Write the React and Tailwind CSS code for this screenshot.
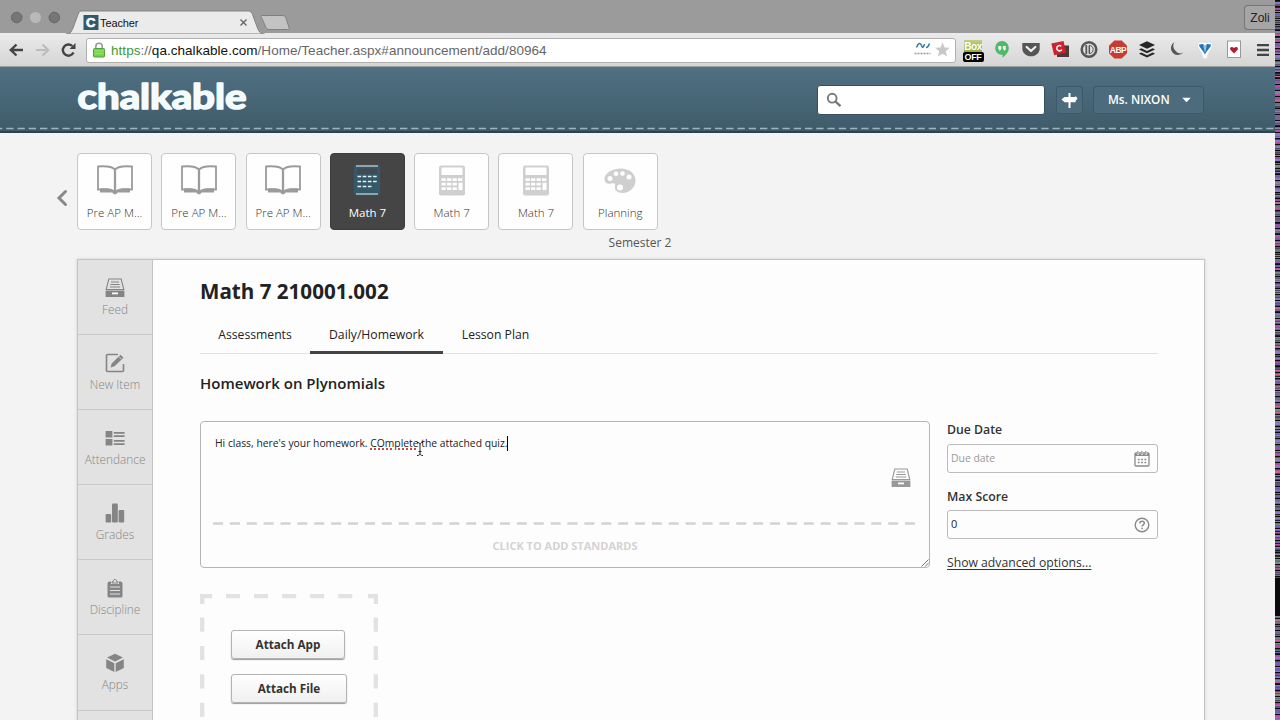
import React, { useState } from "react";

const classes = [
  { name: "Pre AP M...", icon: "book" },
  { name: "Pre AP M...", icon: "book" },
  { name: "Pre AP M...", icon: "book" },
  { name: "Math 7", icon: "calcActive" },
  { name: "Math 7", icon: "calc" },
  { name: "Math 7", icon: "calc" },
  { name: "Planning", icon: "palette" },
];

const tabs = [
  { name: "Assessments", width: "w-[110px]" },
  { name: "Daily/Homework", width: "w-[133px]" },
  { name: "Lesson Plan", width: "w-[105px]" },
];

function DrawerIcon({ className }) {
  return (
    <svg className={className} width="20" height="20" viewBox="0 0 20 20" fill="none">
      <path d="M3.8 1h12.4l2.6 10.5H1.2z" stroke="currentColor" strokeWidth="1.1" />
      <path d="M6 4h8M5.3 6.5h9.4M4.8 9h10.4" stroke="currentColor" strokeWidth="1" />
      <path d="M.6 12.500h18.8v6.500H.6z" fill="currentColor" />
      <path d="M7 14.500h6v1.800H7z" fill="#fff" />
    </svg>
  );
}

function BookIcon() {
  return (
    <svg width="38" height="32" viewBox="0 0 38 32" fill="none">
      <path d="M2 2.500c7-.6 13.500-.5 17 3 3.500-3.500 10-3.600 17-3v23c-7-.5-13.500-.2-17 2.200-3.500-2.400-10-2.700-17-2.200z" fill="#fff" stroke="#9b9b9b" strokeWidth="1.800" />
      <path d="M19 5.500v22" stroke="#9b9b9b" strokeWidth="2.300" />
      <path d="M4 24.500c6-.4 12-.3 15 2.500 3-2.800 9-2.900 15-2.500v4H21.500c-.5 2.400-4.500 2.400-5 0H4z" fill="#9b9b9b" />
    </svg>
  );
}

function CalcIcon() {
  return (
    <svg width="28" height="32" viewBox="0 0 28 32" fill="none">
      <rect x="1" y="1.500" width="26" height="30" rx="2" fill="#cfcfcf" />
      <path d="M3.500 3.500h21v7.500h-21z" fill="#fff" />
      <path d="M3.500 15.700h21M3.500 20.200h16.500M3.500 24.700h16.500" stroke="#fff" strokeWidth="2.800" strokeDasharray="4.300 1.200" />
      <path d="M20.500 18.700h4v7.400h-4z" fill="#fff" />
    </svg>
  );
}

function CalcActiveIcon() {
  return (
    <svg width="28" height="32" viewBox="0 0 28 32" fill="none">
      <rect x="1" y="1" width="26" height="30" rx="2" fill="#36596a" />
      <path d="M4 4.500h20v5.500H4z" fill="#424a4e" />
      <path d="M3 2h22M3 30h22" stroke="#d9f1f8" strokeWidth="1.200" />
      <path d="M4.500 12.500h20M4.500 17.500h20M4.500 22.500h15" stroke="#e3f3f8" strokeWidth="1.300" strokeDasharray="3.600 1.600" />
    </svg>
  );
}

function PaletteIcon() {
  return (
    <svg width="32" height="28" viewBox="0 0 32 28">
      <path d="M18 2.500C8 2 .5 7.500.5 13c0 4 3.500 5.500 7 4.600 3-.8 4 .4 3.500 2.700-.8 4 2.500 6.700 7.500 6.700C26 27 31.500 21 31.500 14.500S26 3 18 2.500z" fill="#cfcfcf" />
      <g fill="#fff">
        <circle cx="6" cy="12.500" r="2.500" />
        <circle cx="12" cy="7.800" r="2.300" />
        <circle cx="18.500" cy="7.500" r="2.300" />
        <circle cx="25" cy="11" r="2.500" />
        <circle cx="16" cy="21.500" r="3" />
      </g>
    </svg>
  );
}

const classIcons = {
  book: BookIcon,
  calc: CalcIcon,
  calcActive: CalcActiveIcon,
  palette: PaletteIcon,
};

function NewItemIcon() {
  return (
    <svg width="20" height="20" viewBox="0 0 20 20" fill="none">
      <path d="M13 1.500H2.500a1 1 0 0 0-1 1v15a1 1 0 0 0 1 1h15a1 1 0 0 0 1-1V11" stroke="currentColor" strokeWidth="1.600" />
      <path d="M5.500 14.500l1.200-4L15.500 1.700l3 3-9 8.600z" fill="currentColor" />
      <path d="M13.800 3.500l2.800 2.800" stroke="#e2e2e2" strokeWidth=".8" />
    </svg>
  );
}

function AttendanceIcon() {
  return (
    <svg width="20" height="20" viewBox="0 0 20 20" fill="currentColor">
      <path d="M.6 3h6.800v6.600H.6zM.6 11h6.800v6.600H.6zM8.800 4h10.800v1.800H8.800zM8.800 7.200h10.800V9H8.800zM8.800 12h10.800v1.800H8.800zM8.800 15.200h10.800V17H8.800z" />
    </svg>
  );
}

function GradesIcon() {
  return (
    <svg width="20" height="20" viewBox="0 0 20 20" fill="currentColor">
      <rect x=".6" y="11" width="5.600" height="8.500" rx="1" />
      <rect x="7" y=".5" width="5.800" height="19" rx="1" />
      <rect x="13.600" y="7" width="5.600" height="12.500" rx="1" />
    </svg>
  );
}

function DisciplineIcon() {
  return (
    <svg width="20" height="20" viewBox="0 0 20 20" fill="none">
      <path d="M2.500 5.500a2 2 0 0 1 2-2H6V6h8V3.500h1.500a2 2 0 0 1 2 2V18a1.500 1.500 0 0 1-1.500 1.500H4A1.500 1.500 0 0 1 2.500 18z" fill="currentColor" />
      <path d="M7 5V3.800h1.300a1.800 1.800 0 1 1 3.400 0H13V5z" stroke="currentColor" />
      <path d="M5 9h10M5 12.500h10M5 16h10" stroke="#e2e2e2" strokeWidth="1.200" />
    </svg>
  );
}

function AppsIcon() {
  return (
    <svg width="20" height="20" viewBox="0 0 20 20" fill="currentColor">
      <path d="M10 .8l8 3.800-8 4-8-4zM1.200 6.300L9.300 10.300v8.700L1.200 15zM18.800 6.300l-8.100 4v8.700l8.100-4z" />
    </svg>
  );
}

const menu = [
  { name: "Feed", Icon: DrawerIcon },
  { name: "New Item", Icon: NewItemIcon },
  { name: "Attendance", Icon: AttendanceIcon },
  { name: "Grades", Icon: GradesIcon },
  { name: "Discipline", Icon: DisciplineIcon },
  { name: "Apps", Icon: AppsIcon },
];

function Extensions() {
  return (
    <div className="ml-[6px] flex items-center gap-[7px]">
      <div className="mt-[2px] flex h-[22px] w-[22px] flex-col items-center font-['Liberation_Sans'] leading-none">
        <span className="h-[12px] w-[18px] bg-linear-to-b from-[#c3cd86] to-[#93ab3c] text-center text-[10px] font-bold leading-[13px] tracking-[-0.5px] text-white">Box</span>
        <span className="h-[10px] w-[21px] rounded-[2px] bg-black text-center text-[9px] font-bold leading-[11px] tracking-[-0.4px] text-white">OFF</span>
      </div>
      <svg width="22" height="22" viewBox="0 0 22 22">
        <path d="M11 2a6.800 6.800 0 0 1 6.800 6.900c0 4-3 7.300-6.300 9.600v-2.700C7 15.800 4.200 12.700 4.200 8.900A6.800 6.800 0 0 1 11 2z" fill="#4fb968" />
        <path d="M7.200 7h3v3.200l-1.300 1.600H8l.5-1.600H7.200zM11.800 7h3v3.200l-1.300 1.600h-.9l.5-1.600h-1.300z" fill="#e9f7ec" />
      </svg>
      <svg width="22" height="22" viewBox="0 0 22 22">
        <path d="M2.300 4h17.400v5.500c0 4.500-4 7.800-8.700 7.800s-8.700-3.300-8.700-7.800z" fill="#555" />
        <path d="M6.700 8l4.300 4 4.300-4" fill="none" stroke="#eee" strokeWidth="2.300" strokeLinecap="round" strokeLinejoin="round" />
      </svg>
      <svg width="22" height="22" viewBox="0 0 22 22">
        <path d="M8 6.500h12V18H8z" fill="#4a3a3a" />
        <path d="M2.300 4.500L14.500 2l2.700 11.500-12 2.700z" fill="#d0202c" />
        <path d="M12.300 7.200a2.700 2.700 0 1 0 .5 3.400" fill="none" stroke="#fff" strokeWidth="1.500" />
      </svg>
      <svg width="22" height="22" viewBox="0 0 22 22" fill="none">
        <circle cx="11" cy="10.500" r="7.300" stroke="#555" strokeWidth="2.500" />
        <path d="M8.300 6v9" stroke="#555" strokeWidth="1.800" />
        <path d="M11.300 6.500v8" stroke="#555" strokeWidth="1.500" />
        <path d="M11 6.300a4.200 4.200 0 0 1 0 8.400" stroke="#555" />
      </svg>
      <svg className="overflow-visible" width="22" height="22" viewBox="0 0 22 22">
        <path d="M7.300 1.500h7.400L20 6.800v7.400l-5.300 5.300H7.300L2 14.200V6.800z" fill="#c93a31" />
        <text x="11" y="13.700" textAnchor="middle" fill="#fff" className="font-['Liberation_Sans'] text-[8.500px] font-bold tracking-[-0.5px]">ABP</text>
      </svg>
      <svg width="22" height="22" viewBox="0 0 22 22" fill="#262626">
        <path d="M11 2.300l8 3.700-8 3.800L3 6z" />
        <path d="M3 10.400l2.300-1.100L11 12l5.700-2.700 2.300 1.100-8 3.800z" />
        <path d="M3 14.700l2.300-1.100 5.700 2.700 5.700-2.700 2.300 1.100-8 3.800z" />
      </svg>
      <svg width="22" height="22" viewBox="0 0 22 22">
        <path d="M9.500 3a7 7 0 1 0 8.800 10.600 5.800 5.800 0 0 1-7.600-1.600A6.500 6.500 0 0 1 9.500 3z" fill="#555" />
      </svg>
      <svg width="22" height="22" viewBox="0 0 22 22">
        <path d="M3.500 6c0-2.500 2.500-3.800 5-2.800h5c2.500-1 5 .3 5 2.800 0 4-4.500 7.500-5 11.500a2.200 2.200 0 0 1-5 0C8 13.500 3.500 10 3.500 6z" fill="#fff" stroke="#d5dde5" />
        <path d="M5 5.500l4-.6 2 2 2-2 4 .6c0 3-4 5.500-6 10-2-4.500-6-7-6-10z" fill="#2873b4" />
        <path d="M9 5.200l2 2 2-2-2 9z" fill="#8cc8e8" />
      </svg>
      <svg width="22" height="22" viewBox="0 0 22 22">
        <rect x="4.500" y="2" width="13" height="16.500" fill="#fff" stroke="#999" />
        <path d="M11 14.500l-3.600-3.800c-1.200-1.600.9-4.200 3.600-1.700 2.700-2.500 4.800.1 3.600 1.700z" fill="#b11d33" />
      </svg>
      <svg width="22" height="22" viewBox="0 0 22 22">
        <path d="M5 6.200h12M5 11h12M5 15.800h12" stroke="#444" strokeWidth="2.300" />
      </svg>
    </div>
  );
}

function Browser() {
  return (
    <div className="font-['Liberation_Sans',sans-serif]">
      <div className="relative flex h-[33px] justify-between bg-[#9b9b9b]">
        <svg width="300" height="34" viewBox="0 0 300 34">
          <g fill="#767676" stroke="#686868">
            <circle cx="16.700" cy="17.500" r="5.300" />
            <circle cx="54.300" cy="17.500" r="5.300" />
          </g>
          <circle cx="35.500" cy="17.500" r="5.500" fill="#b9b9b9" />
          <path d="M66 34c5 0 5.500-3 7-6l5-13.500c1-2.500 1.500-3.500 4-3.500h166c2.500 0 3.500 1 4.500 3.500L257.500 28c1.500 3 2 6 7 6z" fill="#ebebeb" stroke="#828282" />
          <path d="M262 15.500h20c2 0 3 .5 3.700 2l3.300 10c.4 1.200 0 2-1.500 2H269c-1.500 0-2.500-.8-3-2l-4.500-10c-.5-1.200-.5-2 .5-2z" fill="#c3c3c3" stroke="#808080" />
          <path d="M83.500 15h15v15h-15z" fill="#33596c" />
          <text x="86" y="27" fill="#fff" stroke="#fff" strokeWidth=".7" className="text-[13px] font-bold">C</text>
          <text x="100" y="26.500" fill="#111" textLength="38.500" className="text-[11px]">Teacher</text>
          <path d="M240.500 19.500l6 6m0-6l-6 6" stroke="#666" strokeWidth="1.400" />
        </svg>
        <div className="mt-[5px] h-[25px] w-[31px] rounded-l-[4px] border border-r-0 border-[#757575] bg-[#a5a5a5] text-center text-[12px] leading-[25px] text-[#222]">Zoli</div>
      </div>
      <div className="flex h-[34px] items-center border-b border-[#a0a0a0] bg-linear-to-b from-[#ebebeb] to-[#d5d5d5] pl-[8px] pt-px">
        <svg width="78" height="24" viewBox="8 38 78 24" fill="none">
          <path d="M23 50H10.500m6-5.500L10.800 50l5.700 5.500" stroke="#444" strokeWidth="2.400" />
          <path d="M36 50h12.500m-6-5.500l5.700 5.500-5.700 5.500" stroke="#bcbcbc" strokeWidth="2.200" />
          <path d="M73.500 52.500a5.600 5.600 0 1 1-1.200-6.500" stroke="#444" strokeWidth="2.400" />
          <path d="M75.500 43v6h-6z" fill="#444" />
        </svg>
        <div className="flex h-[25px] w-[870px] items-center rounded-[3px] border border-[#b0b0b0] bg-white">
          <svg className="ml-[6px] mr-[6px]" width="12" height="16" viewBox="0 0 12 16">
            <path d="M2.800 7V4.500a3.200 3.200 0 0 1 6.400 0V7" fill="none" stroke="#999" strokeWidth="1.600" />
            <rect x=".5" y="6.500" width="11" height="8.500" rx="1" fill="#7bcf50" stroke="#4da33a" />
            <path d="M1.500 9h9M1.500 11.500h9" stroke="#9fe07c" />
          </svg>
          <div className="w-[800px] whitespace-nowrap pt-[2px] text-[13.500px] tracking-[0.040px] text-[#666]">
            <span className="text-[#3c9b33]">https</span>
            ://<span className="text-[#111]">qa.chalkable.com</span>/Home/Teacher.aspx#announcement/add/80964
          </div>
          <svg className="ml-[2px]" width="38" height="20" viewBox="0 0 38 20">
            <path d="M3.500 7.500c2-5 4-5 5-2s2 2 3-1.500" fill="none" stroke="#357ca8" strokeWidth="1.500" />
            <path d="M13 7.500c1 0 2.500-1 3.500-4" fill="none" stroke="#357ca8" strokeWidth="1.500" />
            <path d="M1.500 13.500h16" stroke="#999" strokeWidth="1.500" strokeDasharray="2 1" />
            <path d="M29.500 2.500l2.100 4.900 5.200.4-4 3.500 1.300 5.200-4.600-2.800-4.600 2.800 1.300-5.200-4-3.500 5.200-.4z" fill="#c8c8c8" />
          </svg>
        </div>
        <Extensions />
      </div>
    </div>
  );
}

function Header() {
  return (
    <header className="h-[67px] border-b-2 border-[#2c4250] bg-linear-to-b from-[#507183] to-[#3f5b6a]">
      <div className="flex h-[58px] items-center pl-[77px] pt-[8px]">
        <svg className="overflow-visible" width="180" height="52" viewBox="0 0 180 52">
          <text x="0.500" y="35" fill="#f4fbff" stroke="#f4fbff" strokeWidth="1.600" strokeLinejoin="round" textLength="169" lengthAdjust="spacingAndGlyphs" className="font-['Lato'] text-[33.500px] font-bold">
            chalkable
          </text>
        </svg>
        <div className="ml-[560px] flex h-[30px] w-[228px] items-center rounded-[3px] border border-[#38505e] bg-white pl-2">
          <svg width="16" height="16" viewBox="0 0 16 16" fill="none" stroke="#777">
            <circle cx="6.200" cy="6.200" r="4.400" strokeWidth="1.900" />
            <path d="M9.500 9.500l5 4.700" strokeWidth="2.400" />
          </svg>
        </div>
        <div className="ml-[11px] flex h-[28px] w-[27px] items-center justify-center rounded-[3px] border border-[#3a596b] bg-[#4c6c7d]">
          <svg width="17" height="17" viewBox="0 0 17 17" fill="#fff">
            <path d="M7.500 1h2v15h-2zM.5 7.500L3.500 5h11V3.800l2 2.700-2 2.700v1H3.500z" />
          </svg>
        </div>
        <div className="ml-[10px] flex h-[28px] w-[111px] items-center rounded-[3px] border border-[#3a596b] bg-[#4c6c7d] pl-[14px] text-[11.800px] font-semibold text-white">
          <span className="w-[74px]">Ms. NIXON</span>
          <svg width="9" height="6" viewBox="0 0 9 6" fill="#fff">
            <path d="M.3.700h8.400L4.500 5.300z" />
          </svg>
        </div>
      </div>
      <svg className="block" width="1275" height="6" viewBox="0 0 1275 6">
        <path d="M-5 3.500h1280" stroke="#9fb4be" strokeWidth="1.600" strokeDasharray="7.300 3.950" />
      </svg>
    </header>
  );
}

function ClassTile({ item }) {
  const Icon = classIcons[item.icon];
  const active = item.icon === "calcActive";
  return (
    <div
      className={`flex h-[77px] w-[75px] flex-col items-center rounded-[4px] border text-[11.500px] ${
        active ? "border-[#3b3b3b] bg-[#454545] text-white" : "border-[#c6c6c6] bg-[#fefefe] font-light text-[#333]"
      }`}
    >
      <div className="mt-[8px] flex h-[36px] items-center">
        <Icon />
      </div>
      <span className="mt-[6px] whitespace-nowrap leading-[18px]">{item.name}</span>
    </div>
  );
}

function Sidebar() {
  return (
    <nav className="w-[75px] shrink-0 border-r border-[#c4c4c4] bg-[#e2e2e2]">
      {menu.map(({ name, Icon }) => (
        <div key={name} className="flex h-[75.100px] flex-col items-center border-b border-[#c9c9c9] pt-[18px] text-[#858585]">
          <Icon />
          <span className="mt-[2px] text-[11.800px] font-light leading-[18px]">{name}</span>
        </div>
      ))}
    </nav>
  );
}

function DescriptionBox() {
  return (
    <div className="relative h-[147px] w-[730px] rounded-[4px] border border-[#b5b5b5]">
      <div className="ml-[14px] mt-[13px] flex h-[17px] items-center text-[10.330px] text-[#222]">
        <p className="whitespace-nowrap">
          Hi class, here's your homework.{" "}
          <span className="underline decoration-[#cf4747] decoration-dotted decoration-[1.500px] underline-offset-[2px]">COmplete</span>
          {" "}the attached quiz.
        </p>
        <span className="h-[15px] w-px bg-black" />
      </div>
      <svg className="absolute left-[214px] top-[19px]" width="10" height="16" viewBox="0 0 10 16" fill="none" stroke="#222">
        <path d="M2 1.500c2 0 3 .5 3 2v9c0 1.500-1 2-3 2M8 1.500c-2 0-3 .5-3 2M8 14.500c-2 0-3-.5-3-2M3.500 10.500h3" />
      </svg>
      <div className="mt-[16px] flex justify-end pr-[18px]">
        <DrawerIcon className="text-[#999]" />
      </div>
      <svg className="ml-[12px] mt-[33px] block" width="705" height="5" viewBox="0 0 705 5">
        <path d="M0 2.500h705" stroke="#d2d2d2" strokeWidth="2.500" strokeDasharray="10 6.880" />
      </svg>
      <p className="mt-[11px] text-center text-[11px] font-bold leading-[18px] text-[#d3d3d3]">CLICK TO ADD STANDARDS</p>
      <svg className="absolute bottom-0 right-0" width="9" height="9" viewBox="0 0 9 9" stroke="#777">
        <path d="M1.500 8.500l7-7M5 8.500L8.500 5" />
      </svg>
    </div>
  );
}

function DueFields() {
  return (
    <div className="w-[211px] text-[12.300px] text-[#333]">
      <label className="block font-semibold leading-[17px]">Due Date</label>
      <div className="mt-[6px] flex h-[29px] items-center justify-between rounded-[3px] border border-[#bbb] pl-[3px] pr-[7px] text-[10.400px] text-[#999]">
        Due date
        <svg width="16" height="16" viewBox="0 0 16 16" fill="none" stroke="#8a8a8a">
          <rect x="1" y="2" width="14" height="13" rx="1" strokeWidth="1.300" />
          <path d="M1 4h14" strokeWidth="2" />
          <path d="M4 0v4M8 0v4M12 0v4" stroke="#fff" strokeWidth="1.200" />
          <path d="M3.800 0v3M7.800 0v3M11.800 0v3" />
          <path d="M3.800 8.500h9M3.800 11.500h9" strokeWidth="1.700" strokeDasharray="1.800 1.500" />
        </svg>
      </div>
      <label className="mt-[15px] block font-semibold leading-[17px]">Max Score</label>
      <div className="mt-[5px] flex h-[29px] items-center justify-between rounded-[3px] border border-[#bbb] pl-[3px] pr-[7px] text-[11px] text-[#222]">
        0
        <svg width="16" height="16" viewBox="0 0 16 16" fill="none" stroke="#8a8a8a">
          <circle cx="8" cy="8" r="6.800" strokeWidth="1.400" />
          <path d="M5.800 6.500c0-3 4.500-2.800 4.500-.2 0 1.500-2.200 1.600-2.200 3.200M8.100 10.800v1.500" strokeWidth="1.500" />
        </svg>
      </div>
      <a className="mt-[15px] block whitespace-nowrap text-[12.200px] leading-[18px] underline underline-offset-2">Show advanced options...</a>
    </div>
  );
}

function Attachments() {
  return (
    <div className="relative mt-[22px] h-[130px] w-[178px] shrink-0">
      <svg className="absolute left-0 top-0" width="178" height="130" viewBox="0 0 178 130" fill="none" stroke="#e2e2e2" strokeWidth="4.300">
        <path d="M2.200 10V2.200h10M168 2.200h8V10" />
        <path d="M26 2.200h128" strokeDasharray="14 14.070" />
        <path d="M2.200 23.500V130M175.800 23.500V130" strokeDasharray="14.200 14.200" />
      </svg>
      <div className="flex flex-col items-start gap-[15px] pl-[31px] pt-[36px] text-[11.700px] font-bold text-[#333]">
        <button className="h-[29px] w-[114px] rounded-[3px] border border-[#b3b3b3] bg-linear-to-b from-white to-[#f0f0f0] shadow-[0_1px_1px_#999]">Attach App</button>
        <button className="h-[29px] w-[116px] rounded-[3px] border border-[#b3b3b3] bg-linear-to-b from-white to-[#f0f0f0] shadow-[0_1px_1px_#999]">Attach File</button>
      </div>
    </div>
  );
}

const stripColors = ["#6c6498", "#6d60b6", "#8b5aa6", "#4d4a58", "#b84fa3", "#67747c", "#8a7abb", "#222222", "#c26888", "#5d5580", "#7a8c8c"];

// scan line strip on the right edge of the recording
function EdgeStrip() {
  const rows = [];
  let seed = 7;
  for (let y = 0; y < 720; y++) {
    seed = (seed * 16807) % 2147483647;
    const dark = y % 6 === 0 || (y > 577 && y < 616);
    rows.push(<path key={y} d={`M0 ${y}.5h5`} stroke={dark ? "#0b0a0d" : stripColors[seed % 11]} />);
  }
  return (
    <svg width="5" height="720" viewBox="0 0 5 720">
      {rows}
    </svg>
  );
}

function App() {
  const [tab, setTab] = useState("Daily/Homework");

  return (
    <div className="flex h-[720px] w-[1280px] overflow-hidden font-['Open_Sans',sans-serif]">
      <div className="flex h-full w-[1275px] flex-col bg-[#f3f3f3]">
        <Browser />
        <Header />

        <div className="flex items-center pl-[56px] pt-[20px]">
          <svg className="mr-[9px] mt-[12px]" width="12" height="18" viewBox="0 0 12 18" fill="none">
            <path d="M9.500 2.500L3 9l6.500 6.500" stroke="#888" strokeWidth="3" strokeLinecap="round" />
          </svg>
          <div className="flex gap-[9.300px]">
            {classes.map((item, i) => (
              <ClassTile key={i} item={item} />
            ))}
          </div>
        </div>
        <p className="mt-[4px] w-[1280px] text-center text-[12px] leading-[18px] text-[#555]">Semester 2</p>

        <div className="ml-[77px] mt-[7px] flex w-[1128px] flex-1 border border-b-0 border-[#c4c4c4] bg-[#fefdfe] shadow-[0_0_3px_#d0d0d0]">
          <Sidebar />
          <main className="flex flex-col pl-[47px]">
            <h1 className="mt-[17px] text-[20.600px] font-bold leading-[28px] text-[#222]">Math 7 210001.002</h1>
            <div className="mt-[10px] flex h-[39px] w-[958px] border-b border-[#e3e3e3]">
              {tabs.map((t) => (
                <button
                  key={t.name}
                  onClick={() => setTab(t.name)}
                  className={`h-[39px] pt-[5px] text-[12.200px] text-[#222] ${t.width} ${tab === t.name ? "border-b-3 border-[#444]" : "border-b-3 border-transparent"}`}
                >
                  {t.name}
                </button>
              ))}
            </div>
            <h2 className="mt-[17px] text-[15px] font-semibold leading-[24px] text-[#222]">Homework on Plynomials</h2>
            <div className="mt-[26px] flex gap-[17px]">
              <DescriptionBox />
              <DueFields />
            </div>
            <Attachments />
          </main>
        </div>
      </div>
      <EdgeStrip />
    </div>
  );
}

export default App;
